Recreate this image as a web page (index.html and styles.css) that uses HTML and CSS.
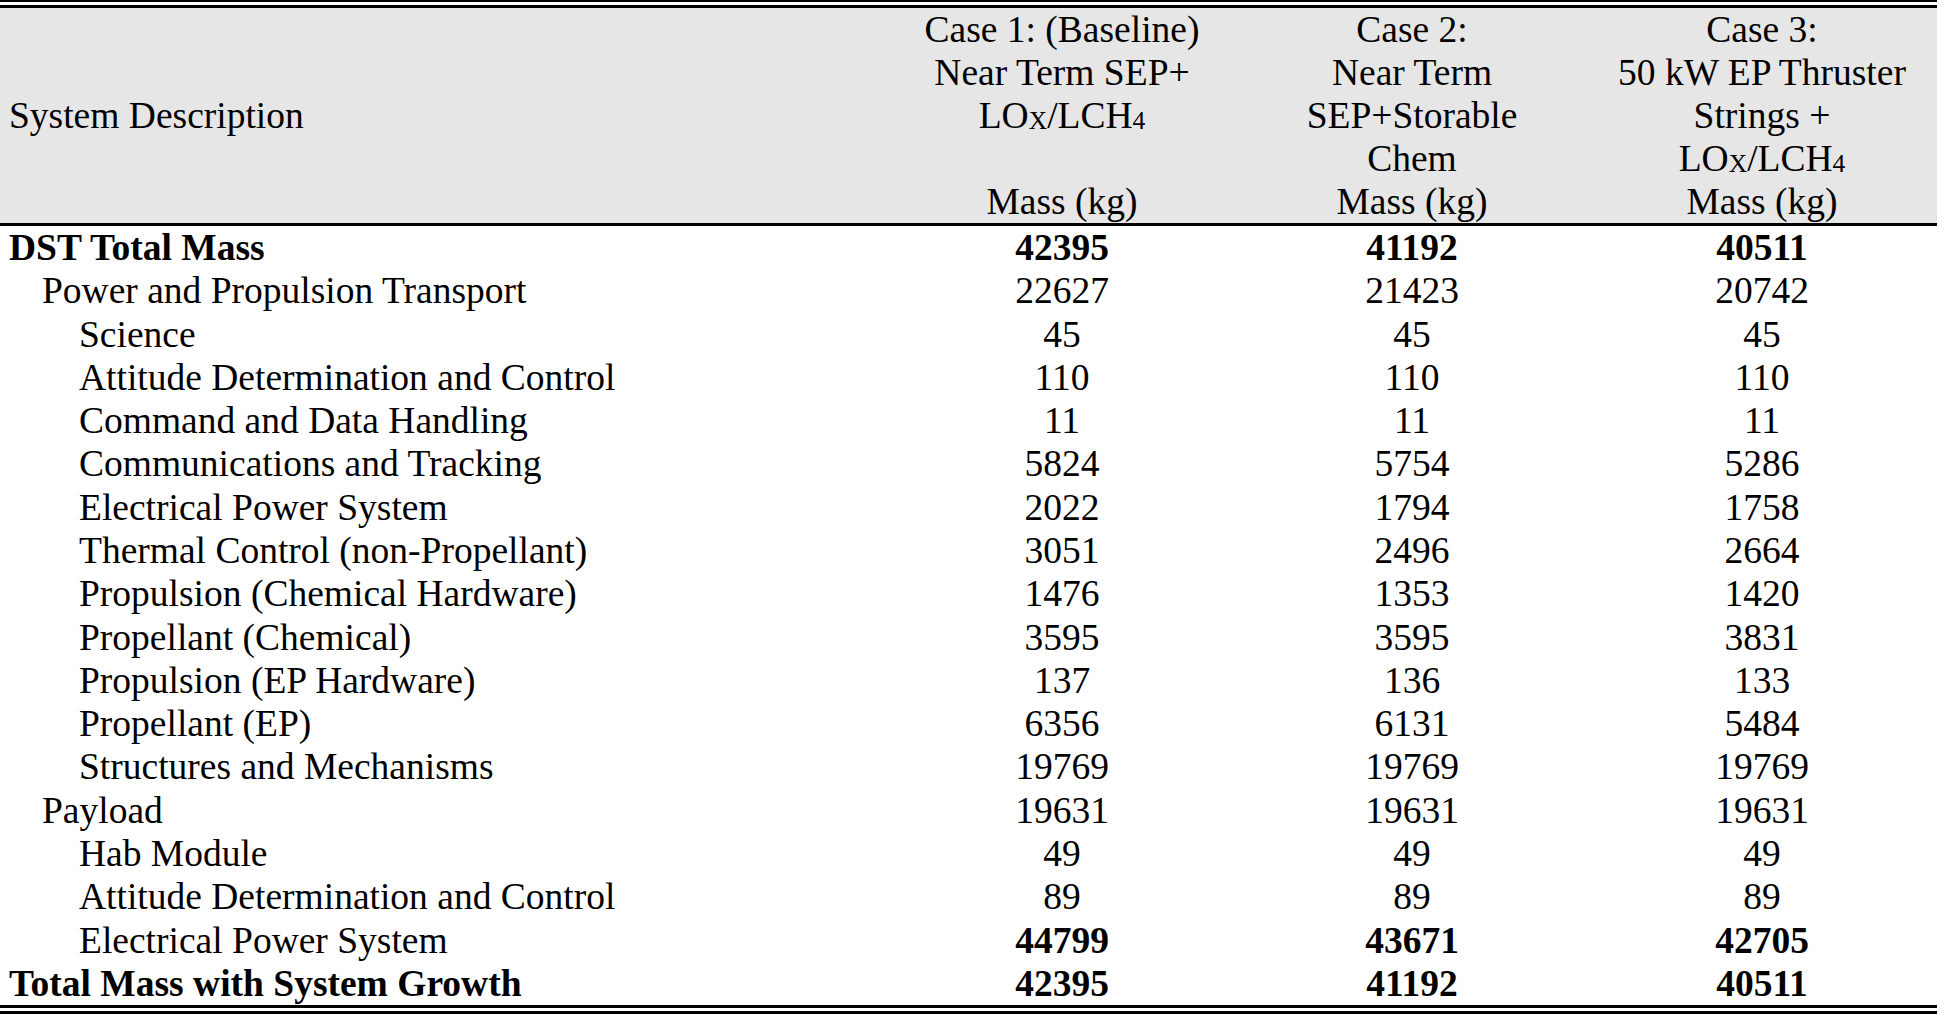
FILE: index.html
```html
<!DOCTYPE html>
<html lang="en">
<head>
<meta charset="utf-8">
<title>DST Mass Summary</title>
<link rel="stylesheet" href="styles.css">
</head>
<body>
<div class="frame">
<table class="mass">
  <colgroup>
    <col class="c-desc">
    <col class="c-case">
    <col class="c-case">
    <col class="c-case">
  </colgroup>
  <thead>
    <tr>
      <th class="desc">System Description</th>
      <th>Case 1: (Baseline)<br>Near Term SEP+<br>LO<span class="sub">X</span>/LCH<span class="sub">4</span><br><br>Mass (kg)</th>
      <th>Case 2:<br>Near Term<br>SEP+Storable<br>Chem<br>Mass (kg)</th>
      <th>Case 3:<br>50 kW EP Thruster<br>Strings +<br>LO<span class="sub">X</span>/LCH<span class="sub">4</span><br>Mass (kg)</th>
    </tr>
  </thead>
  <tbody>
    <tr class="bold"><td class="l0">DST Total Mass</td><td>42395</td><td>41192</td><td>40511</td></tr>
    <tr><td class="l1">Power and Propulsion Transport</td><td>22627</td><td>21423</td><td>20742</td></tr>
    <tr><td class="l2">Science</td><td>45</td><td>45</td><td>45</td></tr>
    <tr><td class="l2">Attitude Determination and Control</td><td>110</td><td>110</td><td>110</td></tr>
    <tr><td class="l2">Command and Data Handling</td><td>11</td><td>11</td><td>11</td></tr>
    <tr><td class="l2">Communications and Tracking</td><td>5824</td><td>5754</td><td>5286</td></tr>
    <tr><td class="l2">Electrical Power System</td><td>2022</td><td>1794</td><td>1758</td></tr>
    <tr><td class="l2">Thermal Control (non-Propellant)</td><td>3051</td><td>2496</td><td>2664</td></tr>
    <tr><td class="l2">Propulsion (Chemical Hardware)</td><td>1476</td><td>1353</td><td>1420</td></tr>
    <tr><td class="l2">Propellant (Chemical)</td><td>3595</td><td>3595</td><td>3831</td></tr>
    <tr><td class="l2">Propulsion (EP Hardware)</td><td>137</td><td>136</td><td>133</td></tr>
    <tr><td class="l2">Propellant (EP)</td><td>6356</td><td>6131</td><td>5484</td></tr>
    <tr><td class="l2">Structures and Mechanisms</td><td>19769</td><td>19769</td><td>19769</td></tr>
    <tr><td class="l1">Payload</td><td>19631</td><td>19631</td><td>19631</td></tr>
    <tr><td class="l2">Hab Module</td><td>49</td><td>49</td><td>49</td></tr>
    <tr><td class="l2">Attitude Determination and Control</td><td>89</td><td>89</td><td>89</td></tr>
    <tr class="bold-nums"><td class="l2">Electrical Power System</td><td>44799</td><td>43671</td><td>42705</td></tr>
    <tr class="bold last"><td class="l0">Total Mass with System Growth</td><td>42395</td><td>41192</td><td>40511</td></tr>
  </tbody>
</table>
</div>
</body>
</html>
```
FILE: styles.css
```css
html, body {
  margin: 0;
  padding: 0;
  background: #ffffff;
}

body {
  font-family: "Liberation Serif", "Times New Roman", serif;
  font-size: 37.5px;
  color: #000;
}

.frame {
  width: 1937px;
  border-top: 2px solid #000;
  border-bottom: 3px solid #000;
  padding: 3px 0;
}

.mass {
  width: 1937px;
  border-collapse: separate;
  border-spacing: 0;
  border-top: 3px solid #000;
  table-layout: fixed;
}

.c-desc { width: 887px; }
.c-case { width: 350px; }

.mass th {
  background: #e6e6e6;
  font-weight: normal;
  text-align: center;
  vertical-align: bottom;
  line-height: 43px;
  padding: 0;
  border-bottom: 3px solid #000;
  white-space: nowrap;
}

.mass th.desc {
  text-align: left;
  vertical-align: middle;
  padding-left: 9px;
}

.sub {
  font-size: 0.68em;
  vertical-align: -0.04em;
  line-height: 0;
}

.mass td {
  padding: 0;
  height: 43.28px;
  line-height: 43.28px;
  text-align: center;
  white-space: nowrap;
}

.mass td.l0 { text-align: left; padding-left: 9px; }
.mass td.l1 { text-align: left; padding-left: 42px; }
.mass td.l2 { text-align: left; padding-left: 79px; }

.bold td { font-weight: bold; }
.bold-nums td + td { font-weight: bold; }

.last td { border-bottom: 3px solid #000; }
```
